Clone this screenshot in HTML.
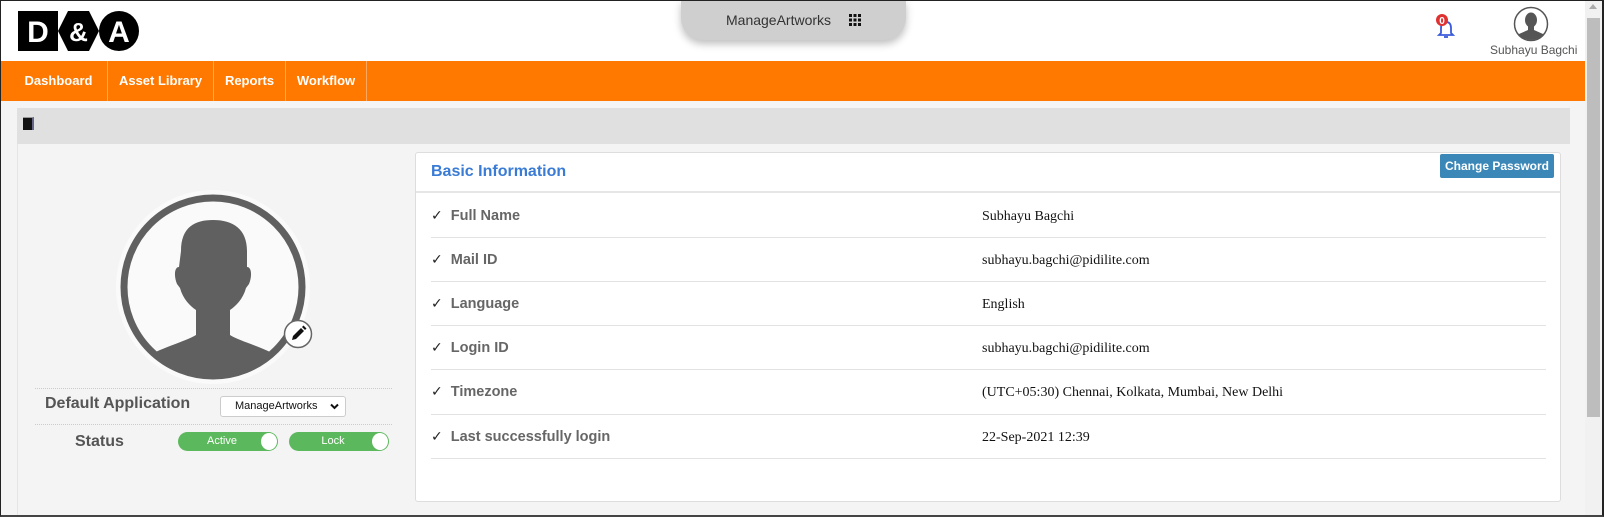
<!DOCTYPE html>
<html><head><meta charset="utf-8"><style>
*{margin:0;padding:0;box-sizing:border-box}
body{width:1604px;height:517px;overflow:hidden;background:#f4f4f4;font-family:"Liberation Sans",Arial,sans-serif;position:relative}
.frame{position:absolute;left:0;top:0;width:1604px;height:517px;border:1px solid #222;border-right:2px solid #222;border-bottom:2px solid #444;pointer-events:none;z-index:50}
.top{position:absolute;left:0;top:0;width:1585px;height:61px;background:#fff}
.tab{position:absolute;left:681px;top:0;width:225px;height:40px;background:#cfcfcf;border-radius:0 0 22px 22px;box-shadow:0 4px 8px rgba(0,0,0,.25);font-size:14px;color:#333;line-height:40px;padding-left:45px}
.grid{position:absolute;left:168px;top:14px;width:12px;height:12px}
.nav{position:absolute;left:0;top:61px;width:1585px;height:40px;background:#ff7800}
.nav div{position:absolute;top:0;height:40px;line-height:40px;color:#fff;font-weight:bold;font-size:13px;border-right:1px solid #ffa860;text-align:center}
.sb{position:absolute;left:1585px;top:0;width:17px;height:517px;background:#f1f1f1}
.thumb{position:absolute;left:1587px;top:18px;width:13px;height:399px;background:#bdbdbd}
.bar{position:absolute;left:17px;top:108px;width:1553px;height:36px;background:#e0e0e0}
.left{position:absolute;left:17px;top:144px;width:398px;height:373px;background:#f4f4f4;border-left:1px solid #e6e6e6}
.panel{position:absolute;left:415px;top:152px;width:1146px;height:350px;background:#fff;border:1px solid #ddd;border-radius:3px}
.ph{height:40px;border-bottom:2px solid #e6e6e6;color:#3a7bd5;font-weight:bold;font-size:16px;line-height:38px;padding-left:15px}
.btn{position:absolute;right:6px;top:1px;width:114px;height:24px;background:#3a87b8;color:#fff;font-weight:bold;font-size:12px;line-height:24px;text-align:center;border-radius:2px}
.row{position:absolute;left:15px;width:1115px;height:44px;border-bottom:1px solid #e2e2e2}
.row .l{position:absolute;left:0;top:14px;font-size:14.5px;font-weight:bold;color:#666}
.row .l b{color:#222;font-weight:bold;margin-right:8px;font-family:"DejaVu Sans",sans-serif;font-size:14px}
.row .v{position:absolute;left:551px;top:15px;font-family:"Liberation Serif",serif;font-size:14px;color:#111}
.dot{position:absolute;left:34px;width:357px;border-top:1px dotted #ccc}
.tg{position:absolute;height:19px;width:100px;background:#5cb85c;border-radius:10px;color:#fff;font-size:11px;line-height:19px;text-align:center;padding-right:12px}
.tg i{position:absolute;right:1px;top:1px;width:16px;height:17px;background:#fff;border-radius:50%}
</style></head><body>
<div class="top">
 <svg style="position:absolute;left:18px;top:11px" width="122" height="40" viewBox="0 0 122 40">
  <rect x="0" y="0" width="40" height="40" fill="#000"/>
  <polygon points="40,20 50,0 71,0 81,20 71,40 50,40" fill="#000"/>
  <circle cx="101" cy="20" r="20" fill="#000"/>
  <text x="20" y="31" fill="#fff" font-family="Liberation Sans" font-weight="bold" font-size="30" text-anchor="middle">D</text>
  <text x="60.5" y="30" fill="#fff" font-family="Liberation Sans" font-weight="bold" font-size="26" text-anchor="middle">&amp;</text>
  <text x="101" y="31" fill="#fff" font-family="Liberation Sans" font-weight="bold" font-size="30" text-anchor="middle">A</text>
 </svg>
 <div class="tab">ManageArtworks
  <svg class="grid" viewBox="0 0 12 12"><g fill="#111"><rect x="0" y="0" width="3" height="3"/><rect x="4.5" y="0" width="3" height="3"/><rect x="9" y="0" width="3" height="3"/><rect x="0" y="4.5" width="3" height="3"/><rect x="4.5" y="4.5" width="3" height="3"/><rect x="9" y="4.5" width="3" height="3"/><rect x="0" y="9" width="3" height="3"/><rect x="4.5" y="9" width="3" height="3"/><rect x="9" y="9" width="3" height="3"/></g></svg>
 </div>
 <svg style="position:absolute;left:1435px;top:13px" width="22" height="28" viewBox="0 0 22 28">
  <path d="M11 9c-4 0-5 3-5 6v5l-2 2h14l-2-2v-5c0-3-1-6-5-6z" fill="none" stroke="#3b5bdb" stroke-width="1.8"/>
  <path d="M9 24h4" stroke="#3b5bdb" stroke-width="1.8"/>
  <circle cx="7" cy="7" r="6" fill="#e03131"/>
  <text x="7" y="11" fill="#fff" font-family="Liberation Sans" font-weight="bold" font-size="10" text-anchor="middle">0</text>
 </svg>
 <svg style="position:absolute;left:1513px;top:6px" width="36" height="36" viewBox="0 0 36 36">
  <circle cx="18" cy="18" r="16.5" fill="#fff" stroke="#555" stroke-width="1.5"/>
  <clipPath id="c1"><circle cx="18" cy="18" r="16"/></clipPath>
  <g clip-path="url(#c1)" fill="#555"><ellipse cx="18" cy="14" rx="6" ry="7.5"/><path d="M15 20h6v4l9 4v8H6v-8l9-4z"/></g>
 </svg>
 <div style="position:absolute;left:1490px;top:43px;font-size:12px;color:#555">Subhayu Bagchi</div>
</div>
<div class="nav">
 <div style="left:0;width:108px;padding-left:10px">Dashboard</div>
 <div style="left:108px;width:106px">Asset Library</div>
 <div style="left:214px;width:72px">Reports</div>
 <div style="left:286px;width:81px">Workflow</div>
</div>
<div class="bar"><div style="position:absolute;left:6px;top:9px;width:11px;height:13px;background:#111;border-right:2px solid #668;border-top:1px solid #999"></div></div>
<div class="left">
 <svg style="position:absolute;left:97px;top:45px" width="200" height="200" viewBox="0 0 200 200">
  <circle cx="98" cy="98" r="97" fill="#fafafa"/>
  <clipPath id="c2"><circle cx="98" cy="98" r="92"/></clipPath>
  <g clip-path="url(#c2)" fill="#606060">
   <path d="M66 62 C66 38 80 31 98 31 C118 31 132 40 132 62 L132 78 C137 78 137 88 134 95 L131 99 C128 110 121 117 115 121 L115 146 C126 153 150 158 172 172 L180 200 L16 200 L24 172 C46 158 70 153 81 146 L81 121 C75 117 68 110 65 99 L62 95 C59 88 59 78 64 78 Z"/>
  </g>
  <circle cx="98" cy="98" r="89" fill="none" stroke="#606060" stroke-width="7"/>
 </svg>
 <svg style="position:absolute;left:265px;top:175px" width="30" height="30" viewBox="0 0 30 30">
  <circle cx="15" cy="15" r="13.5" fill="#fff" stroke="#666" stroke-width="1.5"/>
  <path d="M9 21l1-4 8-8 3 3-8 8z" fill="#111"/><path d="M19 8l1.5-1.5 3 3L22 11z" fill="#111"/>
 </svg>
 <div class="dot" style="top:244px;left:17px"></div>
 <div style="position:absolute;left:27px;top:251px;font-size:16px;font-weight:bold;color:#555">Default Application</div>
 <div style="position:absolute;left:202px;top:252px;width:126px;height:21px;background:#fff;border:1px solid #ccc;border-radius:3px;font-size:11px;color:#111;line-height:19px;padding-left:14px">ManageArtworks
  <svg style="position:absolute;right:6px;top:6px" width="9" height="7" viewBox="0 0 9 7"><path d="M1 1.5l3.5 3.5 3.5-3.5" fill="none" stroke="#111" stroke-width="2"/></svg></div>
 <div class="dot" style="top:280px;left:17px"></div>
 <div style="position:absolute;left:57px;top:289px;font-size:16px;font-weight:bold;color:#555">Status</div>
 <div class="tg" style="left:160px;top:288px">Active<i></i></div>
 <div class="tg" style="left:271px;top:288px">Lock<i></i></div>
</div>
<div class="panel">
 <div class="ph">Basic Information</div>
 <div class="btn">Change Password</div>
 <div class="row" style="top:41px"><div class="l"><b>✓</b>Full Name</div><div class="v">Subhayu Bagchi</div></div>
 <div class="row" style="top:85px"><div class="l"><b>✓</b>Mail ID</div><div class="v">subhayu.bagchi@pidilite.com</div></div>
 <div class="row" style="top:129px"><div class="l"><b>✓</b>Language</div><div class="v">English</div></div>
 <div class="row" style="top:173px"><div class="l"><b>✓</b>Login ID</div><div class="v">subhayu.bagchi@pidilite.com</div></div>
 <div class="row" style="top:217px;height:45px"><div class="l"><b>✓</b>Timezone</div><div class="v">(UTC+05:30) Chennai, Kolkata, Mumbai, New Delhi</div></div>
 <div class="row" style="top:262px"><div class="l"><b>✓</b>Last successfully login</div><div class="v">22-Sep-2021 12:39</div></div>
</div>
<div class="sb"></div><div class="thumb"></div>
<div style="position:absolute;left:1589px;top:4px;width:0;height:0;border:4px solid transparent;border-bottom:5px solid #aaa;border-top:0"></div>
<div class="frame"></div>
</body></html>
